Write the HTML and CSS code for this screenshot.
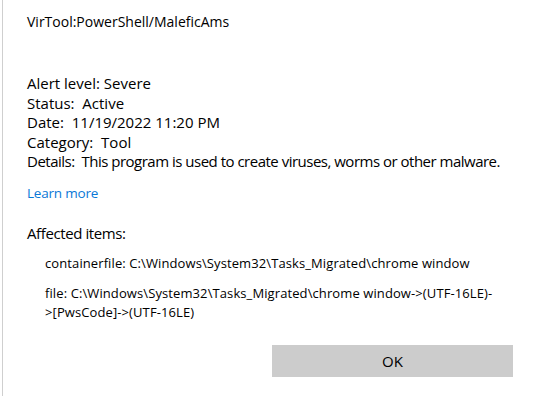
FILE: index.html
```html
<!DOCTYPE html>
<html lang="en">
<head>
<meta charset="UTF-8">
<title>Threat details</title>
<link rel="stylesheet" href="styles.css">
</head>
<body>

<div class="panel">
    <div class="threat-name">VirTool:PowerShell/MaleficAms</div>

    <div class="info">
        <div>Alert level: Severe</div>
        <div>Status:&nbsp; Active</div>
        <div>Date:&nbsp; 11/19/2022 11:20 PM</div>
        <div>Category:&nbsp; Tool</div>
        <div class="details">Details:&nbsp; This program is used to create viruses, worms or other malware.</div>
    </div>

    <a class="learn" href="#">Learn more</a>

    <div class="affected">Affected items:</div>
    <div class="items">
        <p>containerfile: C:\Windows\System32\Tasks_Migrated\chrome window</p>
        <p>file: C:\Windows\System32\Tasks_Migrated\chrome window-&gt;(UTF-16LE)-<br>&gt;[PwsCode]-&gt;(UTF-16LE)</p>
    </div>

    <div class="actions">
        <button>OK</button>
    </div>
</div>

</body>
</html>
```

FILE: styles.css
```css
body {
    margin: 0;
    padding: 0;
    background: #fff;
    color: #000;
    font-family: "Open Sans", "Noto Sans", sans-serif;
}
.panel {
    margin-left: 2px;
    border-left: 1px solid #cfcfcf;
    min-height: 396px;
    box-sizing: border-box;
    padding: 12px 21px 0 24px;
}
.threat-name {
    font-size: 14px;
    line-height: 20px;
}
.info {
    margin-top: 42px;
    font-size: 15px;
    line-height: 19.5px;
    white-space: nowrap;
}
.details {
    letter-spacing: -0.5px;
}
.learn {
    display: block;
    margin-top: 11px;
    font-size: 13.5px;
    line-height: 20px;
    letter-spacing: -0.2px;
    color: #0a78d7;
    text-decoration: none;
}
.affected {
    margin-top: 20px;
    font-size: 15px;
    line-height: 20px;
    letter-spacing: -0.4px;
}
.items {
    padding-left: 18px;
    font-size: 13px;
    line-height: 19px;
    letter-spacing: 0.1px;
}
.items p {
    margin: 11px 0 0;
}
.actions {
    display: flex;
    justify-content: flex-end;
    margin-top: 23px;
}
button {
    width: 241px;
    height: 32px;
    border: none;
    background: #cccccc;
    color: #000;
    font-family: inherit;
    font-size: 15px;
}
```
